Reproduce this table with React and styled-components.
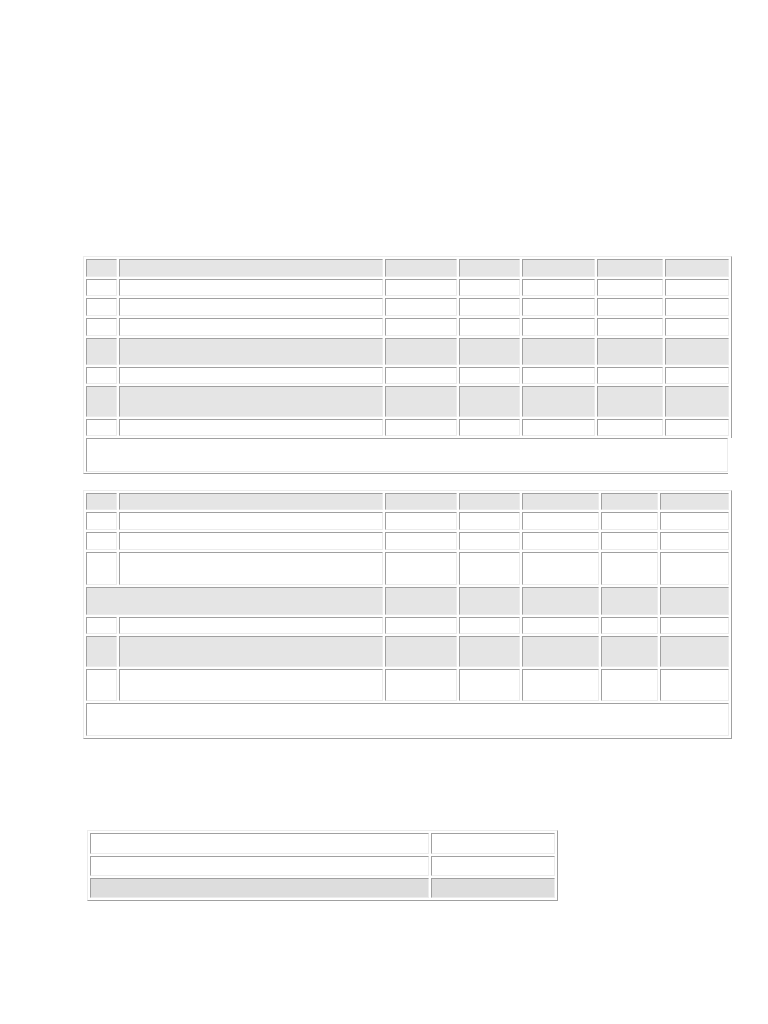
import React from 'react';
import styled, { createGlobalStyle } from 'styled-components';

// grey bevel colours of an old border="1" table
const colors = {
  dark: '#a0a0a0',
  light: '#ececec',
  fill: '#e5e5e5',
  fillDeep: '#dddddd',
};

const GlobalStyle = createGlobalStyle`
  body {
    margin: 8px;
    background: #fff;
    font-family: 'Liberation Serif', 'Times New Roman', serif;
  }
`;

const Page = styled.div`
  display: flex;
  flex-direction: column;
  align-items: flex-start;
  padding: 248px 0 0 75px;
`;

// first block: the grid sits in a frame that only shows its left and bottom edge
const Frame = styled.div`
  width: 645px;
  box-sizing: border-box;
  border-left: 1px solid ${colors.light};
  border-bottom: 1px solid ${colors.dark};
`;

const Grid = styled.table`
  border-collapse: separate;
  border-spacing: 2px;
  table-layout: fixed;
  width: ${(p) => p.$w}px;
  margin-top: ${(p) => p.$top || 0}px;
  margin-left: ${(p) => p.$left || 0}px;
  border-style: solid;
  border-width: ${(p) => (p.$open ? '1px 1px 0 0' : '1px')};
  border-color: ${colors.light} ${colors.dark} ${colors.dark} ${colors.light};
  box-sizing: border-box;
`;

const Col = styled.col`
  width: ${(p) => p.$w}px;
`;

const Cell = styled.td`
  box-sizing: border-box;
  height: ${(p) => p.$h}px;
  padding: 0;
  border: 1px solid;
  border-color: ${colors.dark} ${colors.light} ${colors.light} ${colors.dark};
  background: ${(p) => (p.$fill ? p.$fill : '#fff')};
`;

const Note = styled.div`
  box-sizing: border-box;
  width: 642px;
  height: 34px;
  margin: 0 0 1px 2px;
  border: 1px solid;
  border-color: ${colors.dark} ${colors.light} ${colors.light} ${colors.dark};
  background: #fff;
`;

const cols1 = [31, 264, 72, 61, 73, 66, 64];
const cols2 = [31, 264, 72, 61, 77, 57, 69];

const rows1 = [
  { h: 18, fill: colors.fill },
  { h: 17 },
  { h: 18 },
  { h: 18 },
  { h: 27, fill: colors.fill },
  { h: 17 },
  { h: 31, fill: colors.fill },
  { h: 17 },
];

const rows2 = [
  { h: 17, fill: colors.fill },
  { h: 18 },
  { h: 18 },
  { h: 33 },
  { h: 28, fill: colors.fill, merged: true },
  { h: 17 },
  { h: 31, fill: colors.fill },
  { h: 32 },
];

const rows3 = [
  { h: 21 },
  { h: 20 },
  { h: 20, fill: colors.fillDeep },
];

function Row({ row, count }) {
  const cells = [];
  if (row.merged) {
    cells.push(<Cell key="m" colSpan={2} $h={row.h} $fill={row.fill} />);
    for (let i = 2; i < count; i++) cells.push(<Cell key={i} $h={row.h} $fill={row.fill} />);
  } else {
    for (let i = 0; i < count; i++) cells.push(<Cell key={i} $h={row.h} $fill={row.fill} />);
  }
  return <tr>{cells}</tr>;
}

function Cols({ widths }) {
  return (
    <colgroup>
      {widths.map((w, i) => (
        <Col key={i} $w={w} />
      ))}
    </colgroup>
  );
}

export default function App() {
  return (
    <>
      <GlobalStyle />
      <Page>
        <Frame>
          <Grid $w={648} $open>
            <Cols widths={cols1} />
            <tbody>
              {rows1.map((r, i) => (
                <Row key={i} row={r} count={7} />
              ))}
            </tbody>
          </Grid>
          <Note />
        </Frame>

        <Grid $w={649} $top={16}>
          <Cols widths={cols2} />
          <tbody>
            {rows2.map((r, i) => (
              <Row key={i} row={r} count={7} />
            ))}
            <tr>
              <Cell colSpan={7} $h={33} />
            </tr>
          </tbody>
        </Grid>

        <Grid $w={471} $top={91} $left={4}>
          <Cols widths={[339, 124]} />
          <tbody>
            {rows3.map((r, i) => (
              <Row key={i} row={r} count={2} />
            ))}
          </tbody>
        </Grid>
      </Page>
    </>
  );
}
